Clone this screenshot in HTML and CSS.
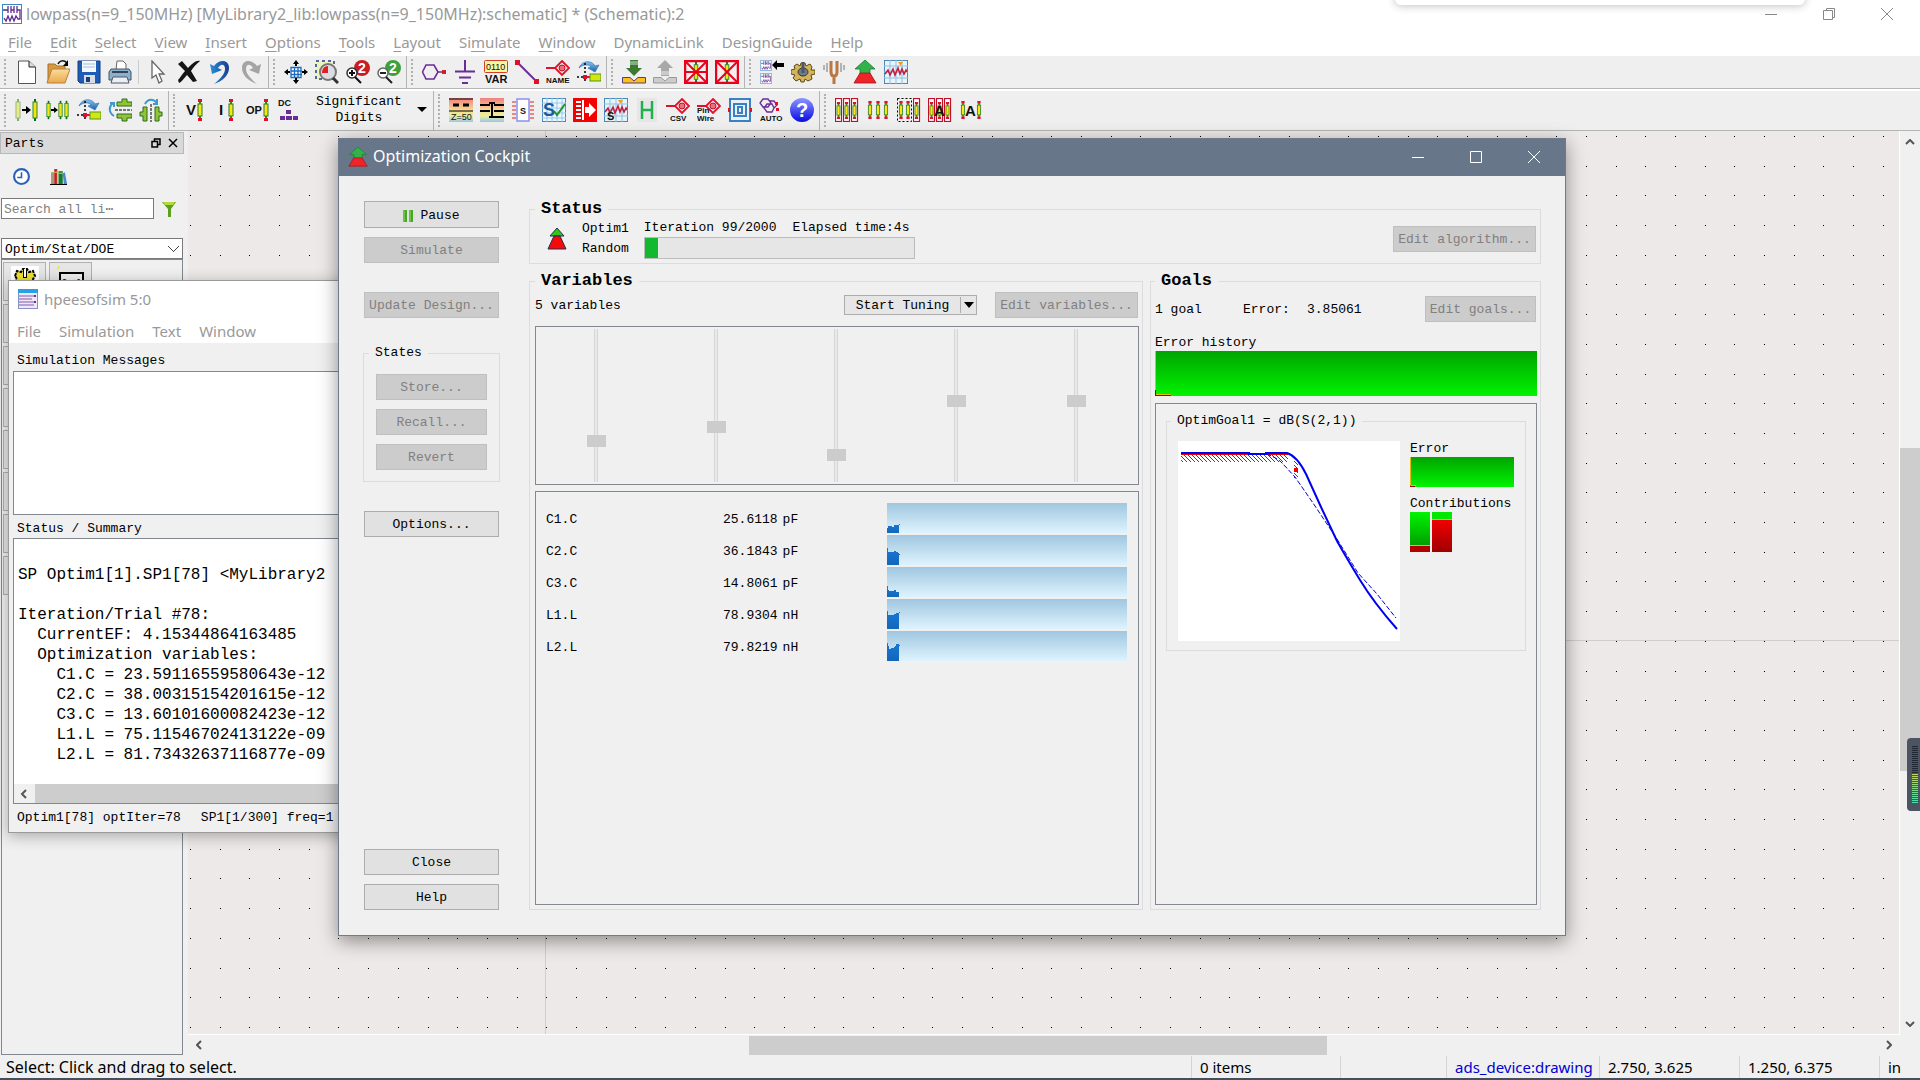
FILE: index.html
```html
<!DOCTYPE html>
<html lang="en">
<head>
<meta charset="utf-8">
<title>lowpass(n=9_150MHz) [MyLibrary2_lib:lowpass(n=9_150MHz):schematic] * (Schematic):2</title>
<link rel="stylesheet" href="styles.css">
</head>
<body>
<svg class="defs" aria-hidden="true">
  <defs>
    <linearGradient id="gBlue" x1="0" y1="0" x2="0" y2="1"><stop offset="0" stop-color="#8cc4ee"/><stop offset="1" stop-color="#1560a8"/></linearGradient>
    <linearGradient id="gUndo" x1="0" y1="0" x2="1" y2="0"><stop offset="0" stop-color="#2c90d8"/><stop offset="1" stop-color="#183c90"/></linearGradient>
    <linearGradient id="gHelp" x1="0" y1="0" x2="0" y2="1"><stop offset="0" stop-color="#8c96ff"/><stop offset="1" stop-color="#0a0ae0"/></linearGradient>
    <linearGradient id="gFold" x1="0" y1="0" x2="0" y2="1"><stop offset="0" stop-color="#fbdc9c"/><stop offset="1" stop-color="#e9a94c"/></linearGradient>
    <linearGradient id="gStrip" x1="0" y1="0" x2="0" y2="1"><stop offset="0" stop-color="#f08080"/><stop offset=".5" stop-color="#f7d890"/><stop offset=".75" stop-color="#e6f09a"/><stop offset="1" stop-color="#9cc4ee"/></linearGradient>
    <linearGradient id="gStem" x1="0" y1="0" x2="0" y2="1"><stop offset="0" stop-color="#1678d8"/><stop offset="1" stop-color="#1466b8"/></linearGradient>
    <pattern id="hatch" width="4" height="4" patternUnits="userSpaceOnUse"><path d="M-1 -1L5 5M-1 3L1 5M3 -1L5 1" stroke="#f00000" stroke-width="1"/></pattern>
    <pattern id="dots" x="2" y="5" width="297" height="297" patternUnits="userSpaceOnUse">
      <path d="M0 .5H297M0 30.5H297M0 59.5H297M0 89.5H297M0 119.5H297M0 148.5H297M0 178.5H297M0 208.5H297M0 238.5H297M0 267.5H297" stroke="#000" stroke-dasharray="1 29 1 28 1 29 1 29 1 28 1 29 1 29 1 29 1 28 1 29"/>
    </pattern>
    <symbol id="res" viewBox="0 0 6 22"><path d="M3 0V22" stroke="#0a6a2c" stroke-width="2"/><rect x="1" y="3" width="4" height="16" fill="#f4e414" stroke="#2a8a2c"/></symbol>
    <symbol id="probe" viewBox="0 0 6 22"><path d="M3 2V20" stroke="#2a8a2c" stroke-width="2"/><rect x="1" y="5" width="4" height="12" fill="#f8e80c" stroke="#2a7a2c"/><path d="M1 0h4v3H1zM1 19h4v3H1z" fill="#e0102a"/></symbol>
    <symbol id="optim" viewBox="0 0 24 24"><path d="M12 0L22 9H17V14H7V9H2Z" fill="#30b44a" stroke="#1c7a30" stroke-width=".8"/><path d="M7 13H17L23 23H1Z" fill="#ee2428" stroke="#a01418" stroke-width=".8"/></symbol>
    <symbol id="rotate" viewBox="0 0 24 24"><path d="M2 8C5 0 15 0 18 6L22 5L18 12L11 8L14 7C12 4 6 4 2 8Z" fill="url(#gBlue)" stroke="#2c78b4" stroke-width=".7"/><path d="M8 3V23M0 17H8" stroke="#000" stroke-width="1.5" stroke-dasharray="2 2"/><path d="M8 17H14" stroke="#e0102a" stroke-width="2"/><rect x="6" y="15" width="4" height="4" fill="#e0102a"/><rect x="13" y="14" width="11" height="7" fill="#d8e410" stroke="#4a9a20"/></symbol>
    <symbol id="plot" viewBox="0 0 24 24"><rect x=".5" y=".5" width="23" height="23" fill="#e8f4fc" stroke="#4a88b8"/><path d="M6 0V24M12 0V24M18 0V24M0 6H24M0 12H24M0 18H24" stroke="#90c0e0"/><path d="M1 14L4 10L6 15L9 9L11 15L14 8L16 14L18 9L20 14L22 10L23 12" fill="none" stroke="#c02040" stroke-width="1.6"/><path d="M14 2H19L16.500 6Z" fill="#f0a020"/></symbol>
    <symbol id="grid" viewBox="0 0 24 24"><rect x=".5" y=".5" width="23" height="23" fill="#eef8fe" stroke="#4a88b8"/><path d="M5 0V24M10 0V24M15 0V24M20 0V24M0 5H24M0 10H24M0 15H24M0 20H24" stroke="#90c8ee"/></symbol>
    <symbol id="diamond" viewBox="0 0 24 24"><path d="M0 8H10M16 1L23 8L16 15L9 8Z" fill="none" stroke="#e0102a" stroke-width="1.800"/><circle cx="16" cy="8" r="3" fill="#e8707c" stroke="#c01028"/></symbol>
    <symbol id="crossed" viewBox="0 0 24 24"><rect x="1" y="1" width="22" height="22" fill="#f4f0f0" stroke="#e8001c" stroke-width="2.500"/><use href="#res" x="9" y="2" width="6" height="20"/><path d="M2 2L22 22M22 2L2 22" stroke="#e8001c" stroke-width="2"/></symbol>
    <symbol id="boxed" viewBox="0 0 8 24"><rect x=".5" y=".5" width="6" height="23" fill="#fff" stroke="#c01028" stroke-width="1.200"/><use href="#probe" x="1" y="4" width="5" height="17"/></symbol>
    <symbol id="sch" viewBox="0 0 20 20"><rect x=".5" y=".5" width="19" height="19" fill="#fff" stroke="#3888c0"/><path d="M1 6H6M6 2V9M9 2V9M9 6H12M12 2V9M15 2V9M15 6H18V15H16L14 12L12 17L10 12L8 17L6 12L4 17L2 14" fill="none" stroke="#5c2a90" stroke-width="1.300"/></symbol>
  </defs>
</svg>

<header class="titlebar">
  <svg width="20" height="20"><use href="#sch"/></svg>
  <h1>lowpass(n=9_150MHz) [MyLibrary2_lib:lowpass(n=9_150MHz):schematic] * (Schematic):2</h1>
  <div class="caption">
    <button aria-label="Minimize"><svg width="14" height="14"><path d="M1 7.500H13" stroke="#888"/></svg></button>
    <button aria-label="Restore"><svg width="14" height="14"><path d="M4.500 3V1.500H12.500V10.500H11M1.500 3.500H10.500V12.500H1.500Z" fill="none" stroke="#888"/></svg></button>
    <button aria-label="Close window"><svg width="14" height="14"><path d="M1 1L13 13M13 1L1 13" stroke="#888"/></svg></button>
  </div>
</header>
<div class="toast"></div>

<nav class="menubar">
  <a href="#"><u>F</u>ile</a><a href="#"><u>E</u>dit</a><a href="#"><u>S</u>elect</a><a href="#"><u>V</u>iew</a><a href="#"><u>I</u>nsert</a><a href="#"><u>O</u>ptions</a><a href="#"><u>T</u>ools</a><a href="#"><u>L</u>ayout</a><a href="#">Si<u>m</u>ulate</a><a href="#"><u>W</u>indow</a><a href="#">DynamicLink</a><a href="#">DesignGuide</a><a href="#"><u>H</u>elp</a>
</nav>

<div class="toolbar">
  <div class="tools">
    <button aria-label="New"><svg viewBox="0 0 24 24"><path d="M3.500 1H14L20.500 7V23.500H3.500Z" fill="#fff" stroke="#555"/><path d="M14 1V7H20.500" fill="#ddd" stroke="#222"/></svg></button>
    <button aria-label="Open"><svg viewBox="0 0 24 24"><path d="M2 23V4H9L11 6H19V10" fill="#d89a3c" stroke="#a8702a"/><path d="M1 23L6 9H24L19 23Z" fill="url(#gFold)" stroke="#b88038"/><path d="M12 4C14 0 18 0 21 3" fill="none" stroke="#111" stroke-width="1.500"/><path d="M22 0V6H17Z"/></svg></button>
    <button aria-label="Save"><svg viewBox="0 0 24 24"><path d="M1 1H23V23H3L1 21Z" fill="#1c5cb8" stroke="#103c80"/><path d="M5 1H19V12H5Z" fill="#f4f8fc"/><path d="M6 4H18M6 7H18" stroke="#a8c0d8"/><path d="M7 15H18V23H7Z" fill="#d8dce4"/><rect x="9" y="17" width="4" height="5" fill="#1c3c78"/></svg></button>
    <button aria-label="Print"><svg viewBox="0 0 24 24"><path d="M8 10L9 1H15L18 4V10" fill="#fff" stroke="#666"/><path d="M3 9H21L23 12V20H1V12Z" fill="#8cb0cc" stroke="#456"/><path d="M4 12H20" stroke="#345" stroke-width="2"/><path d="M5 17H19L21 23H3Z" fill="#e8f0f4" stroke="#556"/></svg></button>
    <i class="sep"></i>
    <button aria-label="Pointer"><svg viewBox="0 0 24 24"><path d="M6 1V18L10 15L13 23L16 21L13 14H18Z" fill="#fff" stroke="#666" stroke-width="1.300"/></svg></button>
    <button aria-label="Delete"><svg viewBox="0 0 24 24"><path d="M1 4L5 1L11 8C15 4 19 0 23 1C19 4 16 8 14 11L20 21L16 22L10 15C7 18 5 22 2 23L1 20C3 18 5 14 8 11Z" fill="#151515"/></svg></button>
    <button aria-label="Undo"><svg viewBox="0 0 24 24"><path d="M2 4L4 14L14 10L10 8C12 4 17 3 17 9C17 14 12 19 6 24C15 21 21 15 21 8C21 -1 11 -1 6 6Z" fill="url(#gUndo)"/></svg></button>
    <button aria-label="Redo"><svg viewBox="0 0 24 24"><path d="M22 4L20 14L10 10L14 8C12 4 7 3 7 9C7 14 12 19 18 24C9 21 3 15 3 8C3 -1 13 -1 18 6Z" fill="#a4a4a4"/></svg></button>
  </div>
  <div class="tools">
    <button aria-label="View all"><svg viewBox="0 0 24 24"><path d="M7 7.500H17V17.500H7ZM10.500 7V18M14 7V18M7 11H18M7 14.500H18" fill="#fff" stroke="#1c6cc0" stroke-width="1.300"/><path d="M12 0L15 4H13V6H11V4H9ZM12 24L15 20H13V18H11V20H9ZM0 12L4 9V11H6V13H4V15ZM24 12L20 9V11H18V13H20V15Z"/></svg></button>
    <button aria-label="Zoom area"><svg viewBox="0 0 24 24"><path d="M1 1H19V19H1Z" fill="#eef4b8" stroke="#1c3c90" stroke-width="1.500" stroke-dasharray="3 3"/><circle cx="13" cy="12" r="8" fill="#dcdce4" stroke="#777" stroke-width="2"/><path d="M13 6V13H7C7 9 9 6 13 6Z" fill="#e81c24"/><path d="M18 18L23 23" stroke="#333" stroke-width="3"/></svg></button>
    <button aria-label="Zoom in by 2"><svg viewBox="0 0 24 24"><circle cx="16" cy="8" r="8" fill="#c81c20"/><text x="12" y="13" class="ic w">2</text><circle cx="6" cy="13" r="5" fill="#fff" stroke="#333" stroke-width="1.500"/><path d="M3 13H9M6 10V16M9 17L15 23" stroke="#111" stroke-width="2"/></svg></button>
    <button aria-label="Zoom out by 2"><svg viewBox="0 0 24 24"><circle cx="16" cy="8" r="8" fill="#3ca03c"/><text x="12" y="13" class="ic w">2</text><circle cx="6" cy="13" r="5" fill="#fff" stroke="#666" stroke-width="1.500"/><path d="M3 13H9M9 17L15 23" stroke="#222" stroke-width="2"/></svg></button>
  </div>
  <div class="tools">
    <button aria-label="Port"><svg viewBox="0 0 24 24"><path d="M4 5H12L16 12L12 19H4L0.500 12ZM16 12H21" fill="none" stroke="#6a2c98" stroke-width="1.600"/><rect x="20" y="10" width="4" height="4" fill="#d02030"/></svg></button>
    <button aria-label="Ground"><svg viewBox="0 0 24 24"><path d="M12 0V11M2 11.500H22M6 17.500H18M9 23H15" stroke="#6a2c98" stroke-width="2"/></svg></button>
    <button aria-label="Variable"><svg viewBox="0 0 24 24"><rect x=".5" y=".5" width="23" height="12" rx="1" fill="#fdf6a0" stroke="#d04020"/><text x="2" y="10" class="ic s n">0110</text><text x="1" y="23" class="ic v">VAR</text></svg></button>
    <button aria-label="Wire"><svg viewBox="0 0 24 24"><path d="M3 3L21 21" stroke="#6a2c98" stroke-width="2"/><path d="M0 0H5V5H0ZM19 19H24V24H19Z" fill="#e0102a"/></svg></button>
    <button aria-label="Name"><svg viewBox="0 0 24 24"><use href="#diamond"/><text x="0" y="23" class="ic t">NAME</text></svg></button>
    <button aria-label="Rotate"><svg viewBox="0 0 24 24"><use href="#rotate"/></svg></button>
  </div>
  <div class="tools">
    <button aria-label="Push into"><svg viewBox="0 0 24 24"><path d="M8 0H16V8H20L12 16L4 8H8Z" fill="#3c7a34"/><path d="M8 2H16M8 4H16" stroke="#cfe0c8"/><path d="M.5 17.500H8L12 21L16 17.500H23.500V23H.5Z" fill="#fcc01c" stroke="#5a3a80"/></svg></button>
    <button aria-label="Pop out"><svg viewBox="0 0 24 24"><path d="M8 16H16V8H20L12 0L4 8H8Z" fill="#a8a8a8"/><path d="M8 12H16M8 14H16" stroke="#eee"/><path d="M.5 17.500H8L12 21L16 17.500H23.500V23H.5Z" fill="#ccc" stroke="#999"/></svg></button>
    <button aria-label="Deactivate"><svg viewBox="0 0 24 24"><use href="#crossed"/><path d="M1 12H23" stroke="#e8001c" stroke-width="2"/></svg></button>
    <button aria-label="Deactivate and short"><svg viewBox="0 0 24 24"><use href="#crossed"/></svg></button>
  </div>
  <div class="tools last">
    <button aria-label="Simulation setup"><svg viewBox="0 0 24 24"><use href="#sch" width="12" height="11"/><use href="#sch" y="13" width="12" height="11"/><path d="M12 5L17 0V3H24V7H17V10Z"/></svg></button>
    <button aria-label="Simulate"><svg viewBox="0 0 24 24"><path d="M10 3H14L15 6L19 4L21 7L20 10H24V14L20 15L21 19L17 21L14 19L13 22H10L9 19L5 21L2 18L4 15L0 14V10L4 9L3 6L6 4L9 6Z" fill="#d4b45c" stroke="#5c4818"/><ellipse cx="12" cy="12" rx="5" ry="4" fill="#6c7c90" stroke="#443410"/><path d="M12 2V13" stroke="#48586c" stroke-width="3"/></svg></button>
    <button aria-label="Tune"><svg viewBox="0 0 24 24"><path d="M9 1V12Q9 16 12 16Q15 16 15 12V1M12 16V24" fill="none" stroke="#b87840" stroke-width="3"/><path d="M5 3V12M2 5V10M19 3V12M22 5V10" stroke="#777"/></svg></button>
    <button aria-label="Optimize"><svg viewBox="0 0 24 24"><use href="#optim"/></svg></button>
    <button aria-label="Data display"><svg viewBox="0 0 24 24"><use href="#plot"/></svg></button>
  </div>
</div>

<div class="toolbar tall">
  <div class="tools">
    <button aria-label="Move component"><svg viewBox="0 0 24 24"><use href="#res" y="1" width="6" height="22" opacity=".5"/><use href="#res" x="17" y="1" width="6" height="22"/><path d="M7 11H11V8L16 12L11 16V13H7Z"/></svg></button>
    <button aria-label="Copy component"><svg viewBox="0 0 24 24"><use href="#res" y="1" width="5" height="22"/><use href="#res" x="12" y="1" width="5" height="22"/><use href="#res" x="18" y="1" width="5" height="22"/><path d="M5 11H8V9L12 12L8 15V13H5Z"/></svg></button>
    <button aria-label="Rotate about point"><svg viewBox="0 0 24 24"><use href="#rotate"/></svg></button>
    <button aria-label="Mirror vertical"><svg viewBox="0 0 24 24"><path d="M7 12H24" stroke="#000" stroke-dasharray="3 1"/><path d="M9 4H14V1H19V4H24V8H9ZM9 16H24V20H19V23H14V20H9Z" fill="#90c434" stroke="#2c6c20"/><path d="M6 18C0 14 1 8 5 5M2 5H6V9" fill="none" stroke="#3c98d0" stroke-width="2"/></svg></button>
    <button aria-label="Mirror horizontal"><svg viewBox="0 0 24 24"><path d="M12 6V24" stroke="#000" stroke-dasharray="3 1"/><path d="M4 9H8V23H4V18H1V14H4ZM16 9H20V14H23V18H20V23H16Z" fill="#90c434" stroke="#2c6c20"/><path d="M6 6C9 0 15 1 18 5M18 1V6H14" fill="none" stroke="#3c98d0" stroke-width="2"/></svg></button>
  </div>
  <div class="tools">
    <button aria-label="Annotate voltage"><svg viewBox="0 0 24 24"><text x="2" y="17" class="ic l">V</text><use href="#probe" x="13" y="1" width="6" height="22"/></svg></button>
    <button aria-label="Annotate current"><svg viewBox="0 0 24 24"><text x="4" y="17" class="ic l">I</text><use href="#probe" x="13" y="1" width="6" height="22"/></svg></button>
    <button aria-label="Annotate operating point"><svg viewBox="0 0 24 24"><text x="0" y="16" class="ic v">OP</text><use href="#probe" x="17" y="1" width="6" height="22"/></svg></button>
    <button aria-label="Clear annotations"><svg viewBox="0 0 24 24"><text x="1" y="8" class="ic s">DC</text><path d="M9 12H14V16H9ZM3 18H8V22H3ZM9 18H15V22H9ZM16 18H21V22H16Z" fill="#6a2c98"/></svg></button>
    <button class="digits"><span>Significant<br>Digits</span><svg viewBox="0 0 10 6"><path d="M0 0H10L5 5Z"/></svg></button>
  </div>
  <div class="tools">
    <button aria-label="Impedance"><svg viewBox="0 0 24 24"><rect width="24" height="24" fill="url(#gStrip)"/><path d="M0 1H24M0 13H24" stroke="#000"/><path d="M4 7H10M14 7H20" stroke="#000" stroke-width="3"/><text x="2" y="22" class="ic s n">Z=50</text></svg></button>
    <button aria-label="Microstrip"><svg viewBox="0 0 24 24"><rect width="24" height="24" fill="url(#gStrip)"/><path d="M0 7H10M0 13H10M24 7H14M24 13H14M9 5H15M12 5V19M9 19H24" fill="none" stroke="#000" stroke-width="2"/></svg></button>
    <button aria-label="S-parameter block"><svg viewBox="0 0 24 24"><path d="M1 4H5M1 8H5M1 12H5M1 16H5M1 20H5M19 4H23M19 8H23M19 12H23M19 16H23M19 20H23" stroke="#e88880" stroke-width="2"/><rect x="6" y="1" width="12" height="22" fill="#fff" stroke="#8c90f0" stroke-width="1.500"/><text x="9" y="16" class="ic s">S</text></svg></button>
    <button aria-label="S-parameter check"><svg viewBox="0 0 24 24"><use href="#grid"/><text x="1" y="18" class="ic l b">S</text><path d="M12 13L15 17L23 6" fill="none" stroke="#28902c" stroke-width="2"/></svg></button>
    <button aria-label="Export"><svg viewBox="0 0 24 24"><rect width="24" height="24" fill="#f40000"/><path d="M10 2V22M3 4H8M3 8H8M3 12H8M3 16H8M3 20H8" stroke="#fff" stroke-width="2"/><path d="M12 9H16V5L23 12L16 19V15H12Z" fill="#fff"/></svg></button>
    <button aria-label="S-parameter plot"><svg viewBox="0 0 24 24"><use href="#plot"/><text x="3" y="22" class="ic v">S</text></svg></button>
    <button aria-label="Harmonic balance"><svg viewBox="0 0 24 24"><rect width="20" height="24" x="2" fill="#e6e6e6"/><path d="M7 3V21M17 3V21M7 12H17" stroke="#20b050" stroke-width="2.500"/></svg></button>
    <button aria-label="CSV names"><svg viewBox="0 0 24 24"><use href="#diamond"/><text x="4" y="23" class="ic t">CSV</text></svg></button>
    <button aria-label="Pin wire"><svg viewBox="0 0 24 24"><use href="#diamond"/><text x="0" y="15" class="ic t">Pin</text><text x="0" y="23" class="ic t">Wire</text></svg></button>
    <button aria-label="Inductor layout"><svg viewBox="0 0 24 24"><path d="M2 1H22V23H2ZM6 6H18V18H6ZM10 9H14V15H10Z" fill="#e8f0f8" stroke="#3c80c4" stroke-width="2"/><path d="M0 10H2V14H0ZM22 10H24V14H22Z" fill="#e0102a"/></svg></button>
    <button aria-label="Auto"><svg viewBox="0 0 24 24"><path d="M4 1H9L12 5L9 9H4L1 5ZM8 6H13L15 10L13 14H8L5 10ZM11 3H15L18 7L15 10" fill="none" stroke="#6a2c98" stroke-width="1.300"/><path d="M16 4H19V7H16ZM17 10H20V13H17Z" fill="#e0102a"/><text x="1" y="23" class="ic t">AUTO</text></svg></button>
    <button aria-label="Help"><svg viewBox="0 0 24 24"><circle cx="12" cy="12" r="12" fill="url(#gHelp)"/><text x="6" y="19" class="ic q">?</text></svg></button>
  </div>
  <div class="tools last">
    <button aria-label="Group 1"><svg viewBox="0 0 24 24"><use href="#boxed" width="8" height="24"/><use href="#boxed" x="8" width="8" height="24"/><use href="#boxed" x="16" width="8" height="24"/></svg></button>
    <button aria-label="Group 2"><svg viewBox="0 0 24 24"><use href="#probe" x="1" y="3" width="6" height="18"/><use href="#probe" x="9" y="3" width="6" height="18"/><use href="#probe" x="17" y="3" width="6" height="18"/></svg></button>
    <button aria-label="Group 3"><svg viewBox="0 0 24 24"><rect x=".5" y=".5" width="14" height="23" fill="none" stroke="#000" stroke-dasharray="2 2"/><use href="#probe" x="1" y="3" width="6" height="18"/><use href="#probe" x="8" y="3" width="6" height="18"/><use href="#boxed" x="16" width="8" height="24"/></svg></button>
    <button aria-label="Group 4"><svg viewBox="0 0 24 24"><use href="#boxed" width="8" height="24"/><use href="#boxed" x="8" width="8" height="24"/><use href="#boxed" x="16" width="8" height="24"/><text x="6" y="18" class="ic l">A</text></svg></button>
    <button aria-label="Group 5"><svg viewBox="0 0 24 24"><use href="#probe" x="1" y="3" width="6" height="18"/><use href="#probe" x="17" y="3" width="6" height="18"/><text x="6" y="18" class="ic l">A</text></svg></button>
  </div>
</div>

<main class="workspace">
  <aside class="parts">
    <div class="parts-head"><span>Parts</span>
      <button aria-label="Float"><svg width="10" height="10"><path d="M3.500 3V1H9V6.500H7M1 3.500H6.500V9H1Z" fill="none" stroke="#000" stroke-width="1.500"/></svg></button>
      <button aria-label="Close parts"><svg width="10" height="10"><path d="M1 1L9 9M9 1L1 9" stroke="#000" stroke-width="1.500"/></svg></button>
    </div>
    <div class="parts-icons">
      <button aria-label="History"><svg viewBox="0 0 16 16"><circle cx="8" cy="8" r="7" fill="#fff" stroke="#2c60b8" stroke-width="2"/><path d="M8 4V9H4" fill="none" stroke="#2c60b8" stroke-width="1.500"/></svg></button>
      <button aria-label="Libraries"><svg viewBox="0 0 16 16"><path d="M1 4H4V15H1Z" fill="#a89878"/><path d="M4 1H7V15H4Z" fill="#c02020"/><path d="M8 3H12V15H8Z" fill="#187830"/><path d="M12 5L14 4L16 15H13Z" fill="#4c88d0"/><path d="M7 1V15M4 4H7M8 5H12" stroke="#e8c840"/><path d="M0 15.500H16" stroke="#000"/></svg></button>
    </div>
    <div class="search">
      <input type="text" placeholder="Search all li⋯" aria-label="Search all libraries">
      <button aria-label="Filter"><svg viewBox="0 0 14 16"><path d="M0 1H14L9 8V16H6V8Z" fill="#5ca020"/><path d="M1 1H13L11 4H3Z" fill="#b8d840"/></svg></button>
    </div>
    <select aria-label="Library"><option>Optim/Stat/DOE</option></select>
    <div class="palette">
      <button aria-label="Optim"><svg viewBox="0 0 28 28"><rect width="28" height="28" fill="#fff"/><path d="M4 10L6 5L10 6L12 3H16L18 6L22 5L24 10L22 13L24 17L19 19L14 20L9 19L4 17L6 13Z" fill="#f0e428" stroke="#000" stroke-width="2" stroke-dasharray="3 1"/><path d="M14 3V12" stroke="#000" stroke-width="4"/><path d="M14 3V11" stroke="#fff" stroke-width="2"/></svg></button>
      <button aria-label="Goal"><svg viewBox="0 0 28 28"><path d="M1 0L2 3M3 0L0 3" stroke="#f4e820"/><rect x="3" y="7" width="23" height="18" fill="#f0f0f0" stroke="#000" stroke-width="2"/><text x="5" y="18" class="ic t g">Goal</text></svg></button>
      <button aria-label="Part 3"></button><button aria-label="Part 4"></button><button aria-label="Part 5"></button><button aria-label="Part 6"></button><button aria-label="Part 7"></button><button aria-label="Part 8"></button><button aria-label="Part 9"></button><button aria-label="Part 10"></button><button aria-label="Part 11"></button><button aria-label="Part 12"></button><button aria-label="Part 13"></button><button aria-label="Part 14"></button><button aria-label="Part 15"></button>
    </div>
  </aside>
  <section class="sheet">
    <svg class="canvas" width="100%" height="100%"><rect width="100%" height="100%" fill="#ede9e8"/><path d="M357.500 0V2000M0 509.500H4000" stroke="#d0cdcc"/><rect width="100%" height="100%" fill="url(#dots)"/></svg>
    <div class="vscroll"><svg width="10" height="6"><path d="M1 5L5 1L9 5" class="chev"/></svg><i></i><svg width="10" height="6"><path d="M1 1L5 5L9 1" class="chev"/></svg></div>
    <div class="hscroll"><svg width="6" height="10"><path d="M5 1L1 5L5 9" class="chev"/></svg><i></i><svg width="6" height="10"><path d="M1 1L5 5L1 9" class="chev"/></svg></div>
  </section>
</main>

<footer class="status">
  <span>Select: Click and drag to select.</span><span>0 items</span><span></span><span class="layer">ads_device:drawing</span><span>2.750, 3.625</span><span>1.250, 6.375</span><span>in</span>
</footer>

<section class="window sim">
  <header class="sim-title"><svg width="20" height="20"><rect x=".5" y=".5" width="19" height="19" fill="#f0e8f8" stroke="#8890c8"/><rect width="20" height="4" fill="#28a0e8"/><path d="M1 7H17M1 10H14M1 13H17M1 16H16" stroke="#8058a8"/><path d="M16 6H18V8H16ZM16 12H18V14H16Z" fill="#6038a0"/></svg><h2>hpeesofsim 5:0</h2></header>
  <nav class="sim-menu"><a href="#">File</a><a href="#">Simulation</a><a href="#">Text</a><a href="#">Window</a></nav>
  <h3>Simulation Messages</h3>
  <div class="messages"></div>
  <h3>Status / Summary</h3>
  <div class="summary">
<pre>

SP Optim1[1].SP1[78] &lt;MyLibrary2

Iteration/Trial #78:
  CurrentEF: 4.15344864163485
  Optimization variables:
    C1.C = 23.59116559580643e-12
    C2.C = 38.00315154201615e-12
    C3.C = 13.60101600082423e-12
    L1.L = 75.11546702413122e-09
    L2.L = 81.73432637116877e-09
</pre>
    <div class="sim-scroll"><svg width="8" height="10"><path d="M6 1L2 5L6 9" class="chev"/></svg><i></i></div>
  </div>
  <p class="sim-status"><span>Optim1[78] optIter=78</span><span>SP1[1/300] freq=1</span></p>
</section>

<section class="window cockpit">
  <header class="cockpit-title">
    <svg width="20" height="20"><use href="#optim"/></svg>
    <h2>Optimization Cockpit</h2>
    <div class="caption">
      <button aria-label="Minimize cockpit"><svg width="14" height="14"><path d="M1 7.500H13" stroke="#fff"/></svg></button>
      <button aria-label="Maximize cockpit"><svg width="14" height="14"><path d="M1.500 1.500H12.500V12.500H1.500Z" fill="none" stroke="#fff"/></svg></button>
      <button aria-label="Close cockpit"><svg width="14" height="14"><path d="M1 1L13 13M13 1L1 13" stroke="#fff"/></svg></button>
    </div>
  </header>
  <div class="cockpit-body">
    <div class="actions">
      <button class="btn pause"><svg width="10" height="12"><path d="M0 0H4V12H0ZM6 0H10V12H6Z" fill="#48a828"/><path d="M1 0V12M7 0V12" stroke="#90d868"/></svg>Pause</button>
      <button class="btn" disabled>Simulate</button>
      <button class="btn update" disabled>Update Design...</button>
      <fieldset class="states">
        <legend>States</legend>
        <button class="btn" disabled>Store...</button>
        <button class="btn" disabled>Recall...</button>
        <button class="btn" disabled>Revert</button>
      </fieldset>
      <button class="btn options">Options...</button>
      <button class="btn close">Close</button>
      <button class="btn">Help</button>
    </div>
    <div class="panels">
      <fieldset class="group run">
        <legend>Status</legend>
        <svg width="20" height="22"><path d="M10 0L17 8H3Z" fill="#30c818" stroke="#203050"/><path d="M7 8H13L19 21H1Z" fill="#f80808" stroke="#203050"/></svg>
        <div class="algo">Optim1<br>Random</div>
        <div class="iter">
          <div><label for="prog">Iteration 99/2000</label><span>Elapsed time:4s</span></div>
          <progress id="prog" max="2000" value="99"></progress>
        </div>
        <button class="btn wide" disabled>Edit algorithm...</button>
      </fieldset>
      <fieldset class="group vars">
        <legend>Variables</legend>
        <div class="row">
          <span>5 variables</span>
          <button class="split"><span>Start Tuning</span><i><svg width="10" height="6"><path d="M0 0H10L5 6Z"/></svg></i></button>
          <button class="btn wide" disabled>Edit variables...</button>
        </div>
        <div class="box sliders">
          <span><input type="range" disabled value="25" aria-label="C1.C"></span>
          <span><input type="range" disabled value="35" aria-label="C2.C"></span>
          <span><input type="range" disabled value="15" aria-label="C3.C"></span>
          <span><input type="range" disabled value="53" aria-label="L1.L"></span>
          <span><input type="range" disabled value="53" aria-label="L2.L"></span>
        </div>
        <div class="box list">
          <table>
            <tr><th>C1.C</th><td>25.6118<span>pF</span></td><td><div class="hist"><svg width="14" height="30"><path d="M0 30V25H1V23H5V24H7V22H12V30ZM12 21H13V22H12Z" fill="url(#gStem)"/></svg></div></td></tr>
            <tr><th>C2.C</th><td>36.1843<span>pF</span></td><td><div class="hist"><svg width="14" height="30"><path d="M0 30V13H1V17H7V16H9V17H11V18H12V30ZM12 19H13V20H12Z" fill="url(#gStem)"/></svg></div></td></tr>
            <tr><th>C3.C</th><td>14.8061<span>pF</span></td><td><div class="hist"><svg width="14" height="30"><path d="M0 30V19H1V23H2V24H7V23H9V25H12V30Z" fill="url(#gStem)"/></svg></div></td></tr>
            <tr><th>L1.L</th><td>78.9304<span>nH</span></td><td><div class="hist"><svg width="14" height="30"><path d="M0 30V12H1V16H7V15H9V14H12V30ZM12 13H13V14H12Z" fill="url(#gStem)"/></svg></div></td></tr>
            <tr><th>L2.L</th><td>79.8219<span>nH</span></td><td><div class="hist"><svg width="14" height="30"><path d="M0 30V12H1V15H2V18H4V17H7V16H8V15H9V13H12V30ZM12 14H13V15H12Z" fill="url(#gStem)"/></svg></div></td></tr>
          </table>
        </div>
      </fieldset>
      <fieldset class="group goals">
        <legend>Goals</legend>
        <div class="row">
          <span class="count">1 goal</span><span class="err">Error:</span><span>3.85061</span>
          <button class="btn" disabled>Edit goals...</button>
        </div>
        <div>Error history</div>
        <div class="green history"><svg width="20" height="45"><path d="M.5 0V40" stroke="#e0c000"/><path d="M1 43.500H16" stroke="#e0c000"/><path d="M.5 39V45M0 44.500H16" stroke="#a00000"/></svg></div>
        <div class="box goal-list">
          <fieldset class="goal">
            <legend>OptimGoal1 = dB(S(2,1))</legend>
            <svg class="curve" width="222" height="200">
              <rect width="222" height="200" fill="#fff"/>
              <rect x="3" y="14" width="107" height="7" fill="url(#hatch)"/>
              <path d="M3 13.500H110" stroke="#f00000"/>
              <rect x="116" y="20" width="4" height="17" fill="url(#hatch)"/><rect x="116" y="27" width="4" height="4" fill="#f00000"/>
              <path d="M88 13Q100 17 105 23L117 36L135 62L159 98L180 132L199 153L218 177" fill="none" stroke="#0000d8" stroke-dasharray="5 2"/>
              <path d="M3 12H71V13H88V12H109Q119 15 128 33L143 66L159 100Q168 116 182 139Q196 162 219 188" fill="none" stroke="#0000f0" stroke-width="2"/>
            </svg>
            <div class="measures">
              <div>Error</div>
              <div class="green small"><svg width="8" height="30"><path d="M.5 0V28M1 28.500H6" stroke="#e0c000"/><path d="M0 29.500H5" stroke="#a00000"/></svg></div>
              <div class="contrib">Contributions</div>
              <svg width="42" height="40"><defs><linearGradient id="cg" x1="0" y1="0" x2="0" y2="1"><stop offset="0" stop-color="#00f400"/><stop offset="1" stop-color="#00a000"/></linearGradient><linearGradient id="cr" x1="0" y1="0" x2="0" y2="1"><stop offset="0" stop-color="#f00000"/><stop offset="1" stop-color="#a00000"/></linearGradient></defs><rect width="20" height="33" fill="url(#cg)"/><path d="M0 33.500H20M22 7.500H42" stroke="#e0c000"/><rect y="34" width="20" height="6" fill="#b00000"/><rect x="22" width="20" height="7" fill="#00e800"/><rect x="22" y="8" width="20" height="32" fill="url(#cr)"/></svg>
            </div>
          </fieldset>
        </div>
      </fieldset>
    </div>
  </div>
</section>

<div class="meter"><i></i></div>
</body>
</html>
```
FILE: styles.css
```css
* { box-sizing: border-box; }
html, body { margin: 0; height: 100%; }
body {
  display: grid;
  grid-template-rows: 28px 26px 35px 42px minmax(0, 1fr) 23px;
  position: relative;
  overflow: hidden;
  border-bottom: 2px solid #454e5c;
  background: #f0f0f0;
  color: #000;
  font: 13px/16px "Liberation Mono", monospace;
}
h1, h2, h3, p, pre { margin: 0; font: inherit; }
button { margin: 0; padding: 0; border: 0; background: none; font: inherit; color: inherit; }
a { color: inherit; text-decoration: none; }
svg { display: block; flex: none; }
fieldset { margin: 0; padding: 0; min-width: 0; border: 1px solid #dcdcdc; }
legend { padding: 0; }
.defs { position: absolute; width: 0; height: 0; }
.chev { fill: none; stroke: #555; stroke-width: 2; }

/* Main window frame */
.titlebar { display: flex; align-items: center; gap: 4px; padding-left: 2px; background: #fff; color: #999; font: 16px/28px "Noto Sans", sans-serif; }
.caption { display: flex; margin-left: auto; }
.caption button { display: grid; place-items: center; width: 58px; }
.titlebar .caption { padding-right: 4px; }
.toast { position: absolute; top: -10px; right: 115px; width: 410px; height: 15px; border-radius: 6px; background: #fff; box-shadow: 0 1px 8px rgba(0, 0, 0, .25); }
.menubar { display: flex; gap: 18px; padding-left: 8px; background: #fff; color: #999; font: 15px/28px "Noto Sans", sans-serif; }
.menubar u { text-underline-offset: 3px; }

/* Toolbars */
.toolbar { display: flex; border-top: 2px solid #fff; border-bottom: 1px solid #b4b4b4; background: #efefef; }
.toolbar:not(.tall) { box-shadow: inset 0 1px #eee; }
.tools { position: relative; display: flex; align-items: center; gap: 7px; padding: 0 5px 0 15px; border-right: 1px solid #b4b4b4; }
.tall .tools { padding-bottom: 2px; }
.tools.last { border-right: 0; }
.tools::before { content: ""; position: absolute; left: 4px; top: 3px; bottom: 3px; border-left: 2px dotted #b0b0b0; }
.tools button svg { width: 24px; height: 24px; }
.sep { width: 1px; height: 24px; margin-left: -1px; background: #ccc; }
.tools .digits { display: flex; align-items: center; gap: 15px; padding: 0 1px 0 8px; text-align: center; }
.tools .digits svg { width: 10px; height: 6px; }
.ic { font: bold 11px "Liberation Sans", sans-serif; fill: #111; }
.ic.v { font-size: 11px; }
.ic.l { font-size: 15px; }
.ic.s { font-size: 9px; }
.ic.t { font-size: 8px; }
.ic.n { font-weight: normal; }
.ic.w { font-size: 14px; fill: #fff; }
.ic.q { font-size: 20px; fill: #fff; }
.ic.b { font-size: 18px; fill: #1c5c98; }
.ic.g { font-family: "Liberation Mono", monospace; }

/* Workspace */
.workspace { display: flex; min-height: 0; }
.parts { display: flex; flex-direction: column; width: 184px; margin-right: 4px; }
.parts-head { display: flex; align-items: center; gap: 7px; height: 22px; margin-top: 1px; padding: 0 5px 0 4px; border: 1px solid #b8b8b8; background: #d9d9d9; }
.parts-head span { flex: 1; padding-top: 2px; }
.parts-icons { display: flex; gap: 20px; padding: 14px 13px 0; }
.parts-icons svg { width: 17px; height: 17px; }
.search { display: flex; align-items: center; gap: 8px; margin: 13px 0 0 1px; }
.search input { width: 153px; height: 21px; padding: 2px 2px 0; border: 1px solid #7a7a7a; background: #fff; font: inherit; }
.search input::placeholder { color: #808080; }
.search svg { width: 14px; height: 16px; }
.parts select { height: 21px; margin: 19px 1px 0; padding: 2px 3px 0; border: 1px solid #7a7a7a; border-radius: 0; appearance: none; font: inherit; color: #000;
  background: linear-gradient(45deg, transparent 46%, #444 46% 58%, transparent 58%) no-repeat right 8px top 7px / 6px 6px, linear-gradient(-45deg, transparent 46%, #444 46% 58%, transparent 58%) no-repeat right 3px top 7px / 6px 6px, #fff; }
.palette { flex: 1; display: grid; grid-template-columns: repeat(2, 43px); grid-auto-rows: 39px; gap: 3px; margin: 0 1px; padding: 2px 1px; border: 1px solid #828790; align-content: start; }
.palette button { display: grid; justify-items: center; align-content: start; padding-top: 3px; border: 1px solid #b0b0b0; background: #e6e6e6; }
.palette svg { width: 28px; height: 28px; }
.sheet { flex: 1; display: grid; grid-template: minmax(0, 1fr) 20px / minmax(0, 1fr) 20px; min-width: 0; }
.canvas { border-right: 1px solid #fff; border-bottom: 1px solid #fff; min-height: 0; }
.vscroll { display: flex; flex-direction: column; align-items: center; padding: 8px 0; }
.vscroll i { width: 100%; height: 323px; margin: 303px 0 auto; background: #cdcdcd; }
.hscroll { display: flex; align-items: center; padding: 0 8px; }
.hscroll i { width: 578px; height: 19px; margin: 0 auto 0 547px; background: #cdcdcd; }
.status { display: grid; grid-template-columns: minmax(0, 1fr) 149px 106px 153px 140px 140px 41px; align-items: center; font: 15px/22px "Noto Sans", sans-serif; }
.status span { height: 22px; padding-left: 8px; border-left: 1px solid #d4d4d4; white-space: nowrap; }
.status span:first-child { padding-left: 6px; border: 0; font-size: 16px; }
.status .layer { color: #0000d0; }
.meter { position: absolute; right: 0; top: 738px; width: 13px; height: 73px; padding: 8px 2px 7px 5px; border-radius: 4px 0 0 4px; background: #4c5462; }
.meter i { display: block; height: 100%; background: repeating-linear-gradient(transparent 0 1px, #4c5462 1px 2px), linear-gradient(#222833 48%, #c8d060 48%, #40e0b0); }

/* Floating windows */
.window { position: absolute; background: #f0f0f0; }
.sim { left: 8px; top: 280px; width: 600px; border: 1px solid #9a9a9a; box-shadow: 0 3px 14px rgba(0, 0, 0, .3); }
.sim-title { display: flex; align-items: center; gap: 6px; height: 36px; padding-left: 9px; background: #fff; color: #999; font: 15px/36px "Noto Sans", sans-serif; }
.sim-menu { display: flex; gap: 18px; height: 26px; padding-left: 8px; background: #fff; color: #999; font: 15px/28px "Noto Sans", sans-serif; }
.sim h3 { padding: 10px 8px 2px; }
.messages { height: 144px; margin: 0 4px; border: 1px solid #828790; background: #fff; }
.sim .messages + h3 { padding: 6px 8px 1px; }
.summary { margin: 0 4px; border: 1px solid #828790; background: #fff; }
.summary pre { height: 245px; padding: 6px 4px 0; overflow: hidden; font: 16px/20px "Liberation Mono", monospace; }
.sim-scroll { display: flex; align-items: center; height: 19px; padding-left: 6px; background: #f0f0f0; }
.sim-scroll i { flex: 1; height: 19px; margin-left: 7px; background: #cdcdcd; }
.sim-status { display: flex; gap: 20px; padding: 6px 8px 6px; }

.cockpit { left: 338px; right: 354px; top: 138px; bottom: 142px; display: flex; flex-direction: column; border: 1px solid #6e7b8c; box-shadow: 0 5px 18px rgba(0, 0, 0, .42); }
.cockpit-title { display: flex; align-items: center; gap: 5px; height: 37px; padding: 0 2px 2px 9px; background: #687689; color: #fff; font: 16px/35px "Noto Sans", sans-serif; }
.cockpit-body { flex: 1; display: grid; grid-template-columns: 137px minmax(0, 1fr); gap: 29px; min-height: 0; padding: 23px 24px 25px; }
.btn { height: 26px; padding-top: 2px; border: 1px solid #adadad; background: #e1e1e1; text-align: center; white-space: nowrap; }
.btn:disabled { border-color: #bfbfbf; background: #ccc; color: #808080; }
.actions { display: flex; flex-direction: column; padding-top: 2px; gap: 9px; }
.actions > .btn { flex: none; margin: 0 1px; }
.actions > .pause { display: flex; align-items: center; justify-content: center; gap: 7px; height: 27px; }
.actions > .update { margin-top: 20px; }
.states { display: flex; flex-direction: column; margin-top: 18px; padding: 13px 12px 11px; }
.states .btn { display: block; width: 100%; }
.states .btn + .btn { margin-top: 9px; }
.states legend, .goal legend { margin-left: -7px; padding: 0 6px; line-height: 18px; }
.states, .goal { margin-top: -1px; }
.actions > .states { margin-top: 17px; padding-top: 12px; }
.actions > .options { margin-top: 20px; }
.actions > .close { margin-top: auto; }

.panels { display: grid; grid-template: 65px minmax(0, 1fr) / 614fr 391fr; gap: 7px; min-width: 0; min-height: 0; }
.group { display: flex; padding: 0 3px 4px 5px; }
.group > legend { padding: 0 6px; font-size: 17px; font-weight: bold; line-height: 20px; }
.run { grid-column: span 2; align-items: center; gap: 15px; }
.run > svg { margin-left: 12px; }
.run > .btn { margin-right: 1px; }
.algo { line-height: 20px; }
.iter > div { display: flex; gap: 16px; }
.iter progress { display: block; width: 271px; height: 22px; margin-top: 1px; border: 1px solid #bcbcbc; appearance: none; background: #e6e6e6; }
.iter progress::-webkit-progress-bar { background: #e6e6e6; }
.iter progress::-webkit-progress-value { background: #12b82e; }
.run .wide { margin-left: auto; }
.wide { width: 143px; }
.vars, .goals { flex-direction: column; }
.row { display: flex; align-items: center; flex: none; }
.row span { padding-top: 2px; }
.vars .row { height: 28px; margin-bottom: 7px; padding-right: 1px; }
.split { display: flex; align-items: center; width: 133px; height: 20px; margin: 0 18px 0 auto; border: 1px solid #adadad; background: #e6e6e6; }
.split span { flex: 1; }
.split i { display: grid; place-items: center; width: 16px; height: 16px; border-left: 1px solid #adadad; }
.box { border: 1px solid #828790; }
.sliders { display: grid; grid-template-columns: repeat(5, 1fr); height: 159px; flex: none; margin-bottom: 6px; padding: 2px 2px 2px 0; }
.sliders span { display: flex; justify-content: center; }
.sliders input { appearance: none; writing-mode: vertical-lr; direction: rtl; width: 19px; height: 153px; margin: 0; background: linear-gradient(#d6d6d6, #d6d6d6) 7px 0 / 1px 100% no-repeat, linear-gradient(#d6d6d6, #d6d6d6) 10px 0 / 1px 100% no-repeat, linear-gradient(#e7eaea, #e7eaea) center / 4px 100% no-repeat; }
.sliders input::-webkit-slider-thumb { appearance: none; width: 19px; height: 12px; background: #ccc; }
.list { flex: 1; padding: 10px 11px 10px 10px; }
.list table { width: 100%; border-collapse: collapse; table-layout: fixed; }
.list tr { height: 32px; }
.list th, .list td { padding: 0; font-weight: normal; text-align: left; }
.list th { width: 177px; padding-top: 3px; }
.list td:nth-child(2) { width: 164px; padding-top: 3px; }
.list td span { margin-left: 5px; }
.hist { height: 30px; background: linear-gradient(#a0c6df, #def3ff); }
.goals { padding-left: 4px; }
.goals .row { height: 36px; margin-bottom: 8px; }
.goals .row .btn { width: 111px; margin: 0 1px 0 auto; }
.count { width: 88px; }
.err { width: 64px; }
.green { background: linear-gradient(#00a400, #00f400); }
.history { flex: none; height: 45px; margin-bottom: 7px; }
.goal-list { flex: 1; padding: 9px 10px; }
.goal { display: flex; align-items: flex-start; gap: 10px; padding: 11px 11px 9px; }
.measures { flex: 1; }
.small { width: 104px; height: 30px; }
.contrib { margin-top: 9px; }
```
